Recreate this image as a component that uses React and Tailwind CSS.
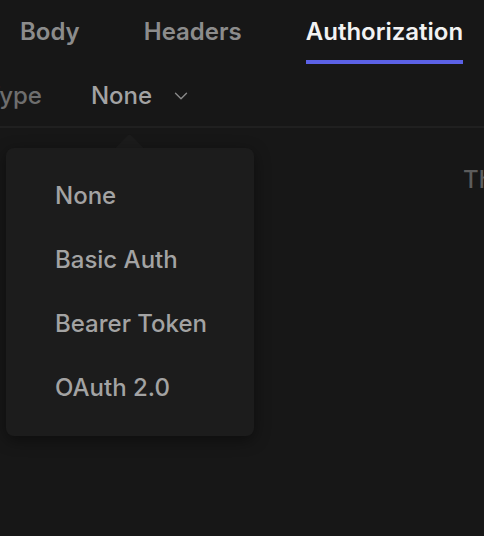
import { ChevronDown } from "lucide-react";

const tabs = ["Body", "Headers", "Authorization"];
const authTypes = ["None", "Basic Auth", "Bearer Token", "OAuth 2.0"];

export default function App() {
  return (
    <div
      className="relative h-[536px] w-[484px] overflow-hidden bg-[#171717] text-[24px]"
      style={{ fontFamily: "Inter, 'Noto Sans', sans-serif" }}
    >
      {/* tabs */}
      <div className="flex h-16 items-stretch gap-[64px] pl-5">
        {tabs.map((tab) => (
          <div
            key={tab}
            className={`flex items-center border-b-4 pt-1 font-semibold whitespace-nowrap ${
              tab === "Authorization"
                ? "border-[#5b61e6] text-[#f2f2f2]"
                : "border-transparent text-[#8c8c8c]"
            }`}
          >
            {tab}
          </div>
        ))}
      </div>

      {/* auth type row */}
      <div className="flex h-16 items-center border-b-2 border-[#202020] pt-0.5 font-medium -ml-[15px]">
        <span className="text-[#6e6e6e]">Type</span>
        <span className="ml-[49px] text-[#a3a3a3]">None</span>
        <ChevronDown className="ml-[18px] text-[#8a8a8a]" size={22} strokeWidth={1.5} />
      </div>

      {/* content */}
      <div className="pt-[34px] pl-[463px] whitespace-nowrap font-medium text-[#5c5c5c]">
        There is no authentication for this request
      </div>

      {/* dropdown */}
      <div className="absolute top-[148px] left-[6px] w-[248px]">
        <div className="absolute -top-[10px] left-[113px] h-[21px] w-[21px] rotate-45 rounded-[3px] bg-[#1c1c1c]" />
        <div className="relative rounded-lg bg-[#1c1c1c] py-4 shadow-[0_4px_16px_rgba(0,0,0,0.45)]">
          {authTypes.map((t) => (
            <div key={t} className="flex h-16 items-center pl-[49px] font-medium text-[#a3a3a3]">
              {t}
            </div>
          ))}
        </div>
      </div>
    </div>
  );
}
